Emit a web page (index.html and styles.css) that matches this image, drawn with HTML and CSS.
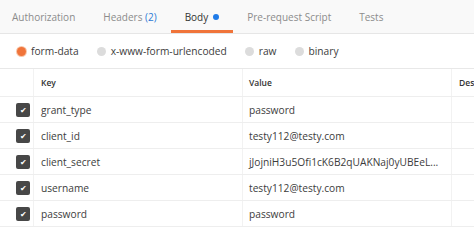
FILE: index.html
```html
<!DOCTYPE html>
<html lang="en">
<head>
    <meta charset="UTF-8">
    <title>Body</title>
    <link rel="stylesheet" href="styles.css">
</head>
<body>
    <!-- tabs -->
    <div class="tabs">
        <div class="tab">Authorization</div>
        <div class="tab">Headers&nbsp;<span class="count">(2)</span></div>
        <div class="tab active">Body <span class="dot"></span></div>
        <div class="tab">Pre-request Script</div>
        <div class="tab">Tests</div>
    </div>

    <!-- body type -->
    <div class="modes">
        <label class="mode"><span class="radio checked"></span>form-data</label>
        <label class="mode"><span class="radio"></span>x-www-form-urlencoded</label>
        <label class="mode"><span class="radio"></span>raw</label>
        <label class="mode"><span class="radio"></span>binary</label>
    </div>

    <!-- params -->
    <div class="params">
        <div class="row head">
            <div class="cell check"></div>
            <div class="cell key">Key</div>
            <div class="cell value">Value</div>
            <div class="cell desc">Des</div>
        </div>
        <div class="row">
            <div class="cell check"><span class="box">&#10004;</span></div>
            <div class="cell key">grant_type</div>
            <div class="cell value">password</div>
            <div class="cell desc"></div>
        </div>
        <div class="row">
            <div class="cell check"><span class="box">&#10004;</span></div>
            <div class="cell key">client_id</div>
            <div class="cell value">testy112@testy.com</div>
            <div class="cell desc"></div>
        </div>
        <div class="row">
            <div class="cell check"><span class="box">&#10004;</span></div>
            <div class="cell key">client_secret</div>
            <div class="cell value">jJojniH3u5Ofi1cK6B2qUAKNaj0yUBEeL...</div>
            <div class="cell desc"></div>
        </div>
        <div class="row">
            <div class="cell check"><span class="box">&#10004;</span></div>
            <div class="cell key">username</div>
            <div class="cell value">testy112@testy.com</div>
            <div class="cell desc"></div>
        </div>
        <div class="row">
            <div class="cell check"><span class="box">&#10004;</span></div>
            <div class="cell key">password</div>
            <div class="cell value">password</div>
            <div class="cell desc"></div>
        </div>
    </div>
</body>
</html>
```

FILE: styles.css
```css
* {
    margin: 0;
    padding: 0;
    box-sizing: border-box;
}

body {
    font-family: 'Open Sans', 'Liberation Sans', sans-serif;
    background: white;
    color: #3c3c3c;
    width: 474px;
    height: 227px;
    overflow: hidden;
}

.tabs {
    display: flex;
    height: 34px;
    background: #f9f9f9;
    border-bottom: 1px solid #e6e6e6;
}

.tab {
    display: flex;
    align-items: center;
    padding: 3px 14px 0;
    font-size: 10px;
    color: #8c8c8c;
    border-bottom: 3px solid transparent;
}

.tab:first-child {
    padding-left: 12px;
}

.tab.active {
    color: #333;
    border-bottom-color: #f0743a;
}

.count {
    color: #2c7ad6;
}

.dot {
    width: 6px;
    height: 6px;
    border-radius: 50%;
    background: #1f7be8;
    margin-left: 5px;
}

.modes {
    display: flex;
    align-items: center;
    height: 34px;
    padding-left: 17px;
    gap: 18px;
}

.mode {
    display: flex;
    align-items: center;
    font-size: 10.2px;
    color: #3c3c3c;
}

.radio {
    width: 9px;
    height: 9px;
    border-radius: 50%;
    background: #dcdcdc;
    margin-right: 5px;
}

.radio.checked {
    background: #f0743a;
    box-shadow: 0 0 0 1px #f8c6a9;
}

.params {
    width: 520px;
    border-top: 1px solid #e8e8e8;
}

.row {
    display: flex;
    height: 26px;
    border-bottom: 1px solid #eeeeee;
}

.row.head {
    height: 28px;
}

.cell {
    display: flex;
    align-items: center;
    padding: 0 7px;
    font-size: 10.2px;
    border-right: 1px solid #f2f2f2;
    white-space: nowrap;
    overflow: hidden;
}

.head .cell {
    font-size: 8.5px;
    font-weight: 600;
    color: #333;
}

.check {
    width: 34px;
    justify-content: flex-end;
    padding: 0 3px 0 0;
}

.key {
    width: 209px;
}

.value {
    width: 209px;
    padding-left: 6px;
}

.desc {
    flex: 1;
}

.box {
    width: 14px;
    height: 14px;
    border-radius: 2px;
    background: #474747;
    color: white;
    font-size: 8px;
    display: flex;
    align-items: center;
    justify-content: center;
}
```
